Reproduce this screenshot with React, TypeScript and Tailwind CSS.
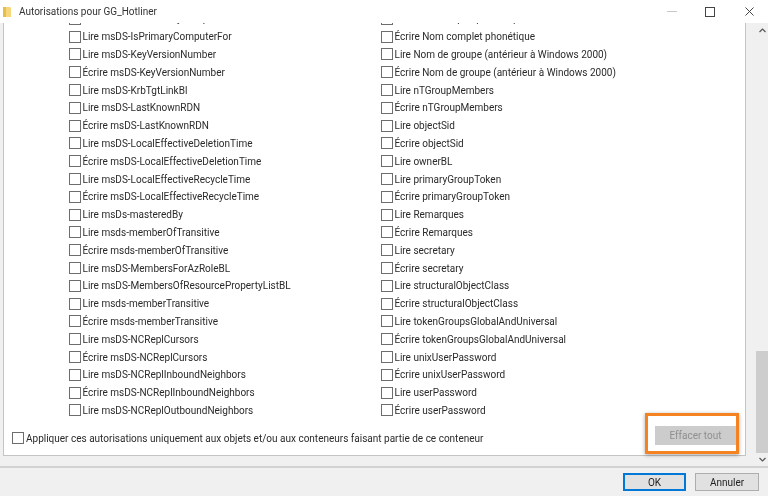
const LEFT_ROWS = [
  'Écrire msDS-IsPrimaryComputerFor',
  'Lire msDS-IsPrimaryComputerFor',
  'Lire msDS-KeyVersionNumber',
  'Écrire msDS-KeyVersionNumber',
  'Lire msDS-KrbTgtLinkBl',
  'Lire msDS-LastKnownRDN',
  'Écrire msDS-LastKnownRDN',
  'Lire msDS-LocalEffectiveDeletionTime',
  'Écrire msDS-LocalEffectiveDeletionTime',
  'Lire msDS-LocalEffectiveRecycleTime',
  'Écrire msDS-LocalEffectiveRecycleTime',
  'Lire msDs-masteredBy',
  'Lire msds-memberOfTransitive',
  'Écrire msds-memberOfTransitive',
  'Lire msDS-MembersForAzRoleBL',
  'Lire msDS-MembersOfResourcePropertyListBL',
  'Lire msds-memberTransitive',
  'Écrire msds-memberTransitive',
  'Lire msDS-NCReplCursors',
  'Écrire msDS-NCReplCursors',
  'Lire msDS-NCReplInboundNeighbors',
  'Écrire msDS-NCReplInboundNeighbors',
  'Lire msDS-NCReplOutboundNeighbors',
];

const RIGHT_ROWS = [
  'Lire Nom complet phonétique',
  'Écrire Nom complet phonétique',
  'Lire Nom de groupe (antérieur à Windows 2000)',
  'Écrire Nom de groupe (antérieur à Windows 2000)',
  'Lire nTGroupMembers',
  'Écrire nTGroupMembers',
  'Lire objectSid',
  'Écrire objectSid',
  'Lire ownerBL',
  'Lire primaryGroupToken',
  'Écrire primaryGroupToken',
  'Lire Remarques',
  'Écrire Remarques',
  'Lire secretary',
  'Écrire secretary',
  'Lire structuralObjectClass',
  'Écrire structuralObjectClass',
  'Lire tokenGroupsGlobalAndUniversal',
  'Écrire tokenGroupsGlobalAndUniversal',
  'Lire unixUserPassword',
  'Écrire unixUserPassword',
  'Lire userPassword',
  'Écrire userPassword',
];

function Check({ label }: { label: string }) {
  return (
    <div className="flex h-[17.81px] items-center gap-[2px] whitespace-nowrap">
      <span className="h-[12px] w-[12px] shrink-0 border border-[#6d6d6d] bg-white" />
      <span>{label}</span>
    </div>
  );
}

function RowColumn({ rows, width }: { rows: string[]; width: string }) {
  return (
    <div className={width}>
      {rows.map((row) => (
        <Check key={row} label={row} />
      ))}
    </div>
  );
}

export default function App() {
  return (
    <div className="relative flex h-[496px] w-[768px] flex-col overflow-hidden bg-white font-['Roboto','Noto_Sans',sans-serif] text-[10px] text-[#2a2a2a] blur-[0.3px]">
      <div className="flex h-[23px] shrink-0 items-center pl-[3px]">
        <svg width="8" height="10" viewBox="0 0 8 10" className="mr-[8px]">
          <path d="M0 0h7l1 1v9H0z" fill="#f6d77c" />
          <path d="M0 0h3v10H0z" fill="#e9bd4c" />
        </svg>
        <span className="text-[#333]">Autorisations pour GG_Hotliner</span>
        <div className="ml-auto flex items-center pr-[14px]">
          <span className="mr-[28px] h-px w-[10px] bg-[#c8c8c8]" />
          <span className="mr-[30px] h-[10px] w-[10px] border border-[#444]" />
          <svg width="9" height="9" viewBox="0 0 9 9" stroke="#444" fill="none">
            <path d="M0.5 0.5l8 8M8.5 0.5l-8 8" />
          </svg>
        </div>
      </div>

      <div className="flex h-[443px] shrink-0 bg-[#f0f0f0]">
        <div className="w-[3px]" />
        <div className="flex h-[433px] w-[743px] flex-col overflow-hidden border-x border-b border-[#c4c4c4] bg-white">
          <div className="flex h-[404px] shrink-0 overflow-hidden pl-[64.5px]">
            <div className="-mt-[13px] flex">
              <RowColumn rows={LEFT_ROWS} width="w-[312px]" />
              <RowColumn rows={RIGHT_ROWS} width="w-[340px]" />
            </div>
          </div>
          <div className="flex flex-1 items-start pl-[8px]">
            <div className="mt-[4px] flex h-[14px] items-center gap-[2px] whitespace-nowrap">
              <span className="h-[12px] w-[12px] border border-[#6d6d6d]" />
              <span>Appliquer ces autorisations uniquement aux objets et/ou aux conteneurs faisant partie de ce conteneur</span>
            </div>
            <button className="ml-auto mr-[9px] mt-[-1px] h-[19px] w-[81px] bg-[#cccccc] text-[#8f8f8f]">
              Effacer tout
            </button>
          </div>
        </div>
        <div className="w-[10px]" />
        <div className="flex w-[12px] flex-col">
          <div className="flex h-[14px] items-center justify-center">
            <svg width="7" height="5" viewBox="0 0 7 5" fill="none" stroke="#555" strokeWidth="1.2">
              <path d="M0.5 4L3.5 1l3 3" />
            </svg>
          </div>
          <div className="mt-auto h-[102px] bg-[#cdcdcd]" />
          <div className="flex h-[13px] items-center justify-center">
            <svg width="7" height="5" viewBox="0 0 7 5" fill="none" stroke="#555" strokeWidth="1.2">
              <path d="M0.5 1L3.5 4l3-3" />
            </svg>
          </div>
        </div>
      </div>

      <div className="flex h-[30px] shrink-0 items-center justify-end gap-[9px] border-t-2 border-[#d2d2d2] bg-[#f0f0f0] pr-[9px]">
        <button className="h-[18px] w-[63px] border-2 border-[#0078d7] bg-[#e1e1e1] text-[#222]">OK</button>
        <button className="h-[18px] w-[64px] border border-[#adadad] bg-[#e1e1e1] text-[#222]">Annuler</button>
      </div>

      <div className="absolute left-[645px] top-[413px] h-[41px] w-[94px] border-[3px] border-[#f58220] shadow-[0_1px_4px_rgba(0,0,0,0.35)]" />
    </div>
  );
}
